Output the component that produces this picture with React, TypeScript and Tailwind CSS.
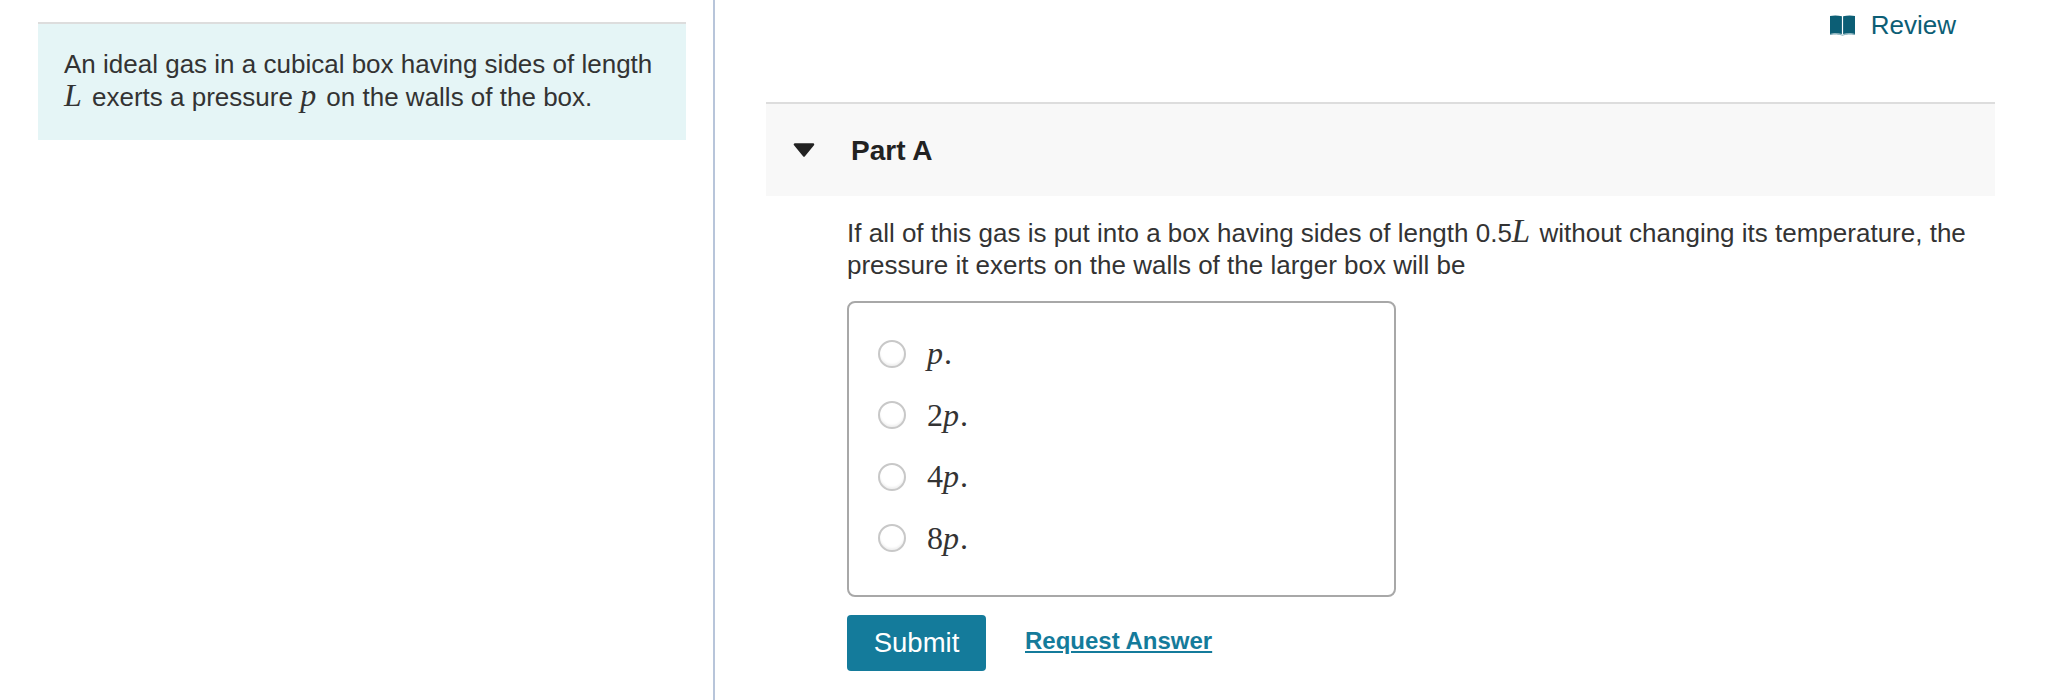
const sans = "font-['Liberation_Sans',Arial,sans-serif]";

function MathVar({ children, className = "" }: { children: React.ReactNode; className?: string }) {
  return <span className={`font-['Liberation_Serif',serif] italic ${className}`}>{children}</span>;
}

function BookIcon() {
  return (
    <svg width="25" height="21" viewBox="0 0 25 21" className="mr-[16px]">
      <path d="M0 1 C3 .2 8 .2 11.9 1.2 V19 C8 18 3 18 0 19 Z" fill="#0c5e75" />
      <path d="M25 1 C22 .2 17 .2 13.1 1.2 V19 C17 18 22 18 25 19 Z" fill="#0c5e75" />
      <path d="M0 19.6 C4 18.6 9 18.8 12.5 20.2 C16 18.8 21 18.6 25 19.6" fill="none" stroke="#0c5e75" strokeOpacity="0.55" strokeWidth="1" />
    </svg>
  );
}

const options = [
  { n: "", key: "a" },
  { n: "2", key: "b" },
  { n: "4", key: "c" },
  { n: "8", key: "d" },
];

export default function App() {
  return (
    <div className={`${sans} flex h-[700px] w-[2068px] overflow-hidden bg-white text-[26px] leading-[32px] text-[#333]`}>
      <div className="w-[713px] shrink-0 pl-[38px] pr-[27px] pt-[22px]">
        <div className="h-[118px] border-t-2 border-[#dddddd] bg-[#e5f5f6] px-[26px] pt-[24px]">
          An ideal gas in a cubical box having sides of length
          <br />
          <MathVar className="mr-[3px] text-[32px] leading-[30px]">L</MathVar> exerts a pressure{" "}
          <MathVar className="mr-[3px] text-[32px] leading-[30px]">p</MathVar> on the walls of the box.
        </div>
      </div>

      <div className="h-full w-[2px] shrink-0 bg-[#b8c5da]" />

      <div className="flex-1 pl-[51px] pr-[73px]">
        <div className="flex h-[102px] items-start justify-end pr-[39px] pt-[9px]">
          <a className="flex items-center text-[26px] leading-[32px] text-[#0c5e75]">
            <BookIcon />
            Review
          </a>
        </div>

        <div className="flex h-[94px] items-center border-t-2 border-[#dddddd] bg-[#f8f8f8]">
          <svg width="22" height="14" viewBox="0 0 22 14" className="ml-[27px] mr-[36px]">
            <path d="M2 1.5 H20 L11 12.5 Z" fill="#222" stroke="#222" strokeWidth="2.5" strokeLinejoin="round" />
          </svg>
          <h2 className="mt-[1px] text-[28px] font-bold text-[#222]">Part A</h2>
        </div>

        <div className="pl-[81px]">
          <p className="mt-[20px]">
            If all of this gas is put into a box having sides of length 0.5
            <MathVar className="mr-[2px] text-[33px] leading-[30px]">L</MathVar> without changing its temperature, the
            <br />
            pressure it exerts on the walls of the larger box will be
          </p>

          <div className="mt-[20px] flex h-[296px] w-[549px] flex-col gap-[30.5px] rounded-[8px] border-2 border-[#a8a8a8] pl-[29px] pt-[35px]">
            {options.map((o) => (
              <label key={o.key} className="flex h-[31px] items-center gap-[21px]">
                <span className="h-[28px] w-[28px] rounded-full border-2 border-[#c8c8c8] bg-white shadow-[inset_0_-2px_2px_rgba(0,0,0,0.06)]" />
                <span className="font-['Liberation_Serif',serif] text-[32px] leading-[31px]">
                  {o.n}
                  <i>p</i>
                  <span className="ml-[1px]">.</span>
                </span>
              </label>
            ))}
          </div>

          <div className="mt-[18px] flex items-start">
            <button className="h-[56px] w-[139px] rounded-[4px] bg-[#147b9b] text-[27.5px] text-white">Submit</button>
            <a className="ml-[39px] mt-[10px] text-[24px] font-bold text-[#147b9b] underline">Request Answer</a>
          </div>
        </div>
      </div>
    </div>
  );
}
